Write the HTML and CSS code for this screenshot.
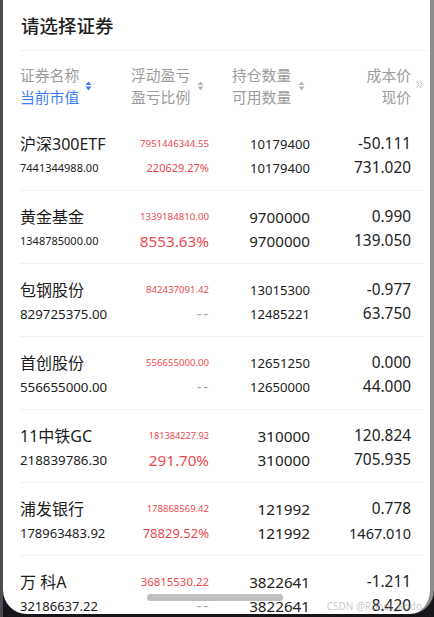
FILE: index.html
```html
<!DOCTYPE html>
<html lang="zh-CN">
<head>
<meta charset="utf-8">
<title>请选择证券</title>
<link rel="stylesheet" href="styles.css">
</head>
<body>
<div class="screen">
  <div class="title">请选择证券</div>

  <div class="thead">
    <div class="th">
      <div class="th-text"><div class="hl">证券名称</div><div class="hl active">当前市值</div></div>
      <svg class="sort on" width="7" height="10" viewBox="0 0 7 10"><path d="M3.5 0.5L6.5 4H0.5Z"/><path d="M0.5 5.5H6.5L3.5 9.5Z"/></svg>
    </div>
    <div class="th">
      <div class="th-text"><div class="hl">浮动盈亏</div><div class="hl">盈亏比例</div></div>
      <svg class="sort" width="7" height="10" viewBox="0 0 7 10"><path d="M3.5 0.5L6.5 4H0.5Z"/><path d="M0.5 5.5H6.5L3.5 9.5Z"/></svg>
    </div>
    <div class="th">
      <div class="th-text"><div class="hl">持仓数量</div><div class="hl">可用数量</div></div>
      <svg class="sort" width="7" height="10" viewBox="0 0 7 10"><path d="M3.5 0.5L6.5 4H0.5Z"/><path d="M0.5 5.5H6.5L3.5 9.5Z"/></svg>
    </div>
    <div class="th th-end">
      <div class="th-text right"><div class="hl">成本价</div><div class="hl">现价</div></div>
      <svg class="more" width="7" height="9" viewBox="0 0 7 9"><path d="M0.6 1L3 4.5L0.6 8M3.8 1L6.2 4.5L3.8 8"/></svg>
    </div>
  </div>

  <div class="rows">
    <div class="row">
      <div class="cell"><div class="ln name">沪深300ETF</div><div class="ln f110">7441344988.00</div></div>
      <div class="cell num"><div class="ln red f97">7951446344.55</div><div class="ln red f110">220629.27%</div></div>
      <div class="cell num"><div class="ln f131">10179400</div><div class="ln f131">10179400</div></div>
      <div class="cell num"><div class="ln f154">-50.111</div><div class="ln f154">731.020</div></div>
    </div>
    <div class="row">
      <div class="cell"><div class="ln name">黄金基金</div><div class="ln f110">1348785000.00</div></div>
      <div class="cell num"><div class="ln red f97">1339184810.00</div><div class="ln red f153">8553.63%</div></div>
      <div class="cell num"><div class="ln f152">9700000</div><div class="ln f152">9700000</div></div>
      <div class="cell num"><div class="ln f154">0.990</div><div class="ln f154">139.050</div></div>
    </div>
    <div class="row">
      <div class="cell"><div class="ln name">包钢股份</div><div class="ln f133">829725375.00</div></div>
      <div class="cell num"><div class="ln red f96">842437091.42</div><div class="ln dash">--</div></div>
      <div class="cell num"><div class="ln f131">13015300</div><div class="ln f131">12485221</div></div>
      <div class="cell num"><div class="ln f154">-0.977</div><div class="ln f154">63.750</div></div>
    </div>
    <div class="row">
      <div class="cell"><div class="ln name">首创股份</div><div class="ln f133">556655000.00</div></div>
      <div class="cell num"><div class="ln red f96">556655000.00</div><div class="ln dash">--</div></div>
      <div class="cell num"><div class="ln f131">12651250</div><div class="ln f131">12650000</div></div>
      <div class="cell num"><div class="ln f154">0.000</div><div class="ln f154">44.000</div></div>
    </div>
    <div class="row">
      <div class="cell"><div class="ln name">11中铁GC</div><div class="ln f133">218839786.30</div></div>
      <div class="cell num"><div class="ln red f92">181384227.92</div><div class="ln red f152">291.70%</div></div>
      <div class="cell num"><div class="ln f153">310000</div><div class="ln f153">310000</div></div>
      <div class="cell num"><div class="ln f154">120.824</div><div class="ln f154">705.935</div></div>
    </div>
    <div class="row">
      <div class="cell"><div class="ln name">浦发银行</div><div class="ln f130">178963483.92</div></div>
      <div class="cell num"><div class="ln red f95">178868569.42</div><div class="ln red f130">78829.52%</div></div>
      <div class="cell num"><div class="ln f153">121992</div><div class="ln f153">121992</div></div>
      <div class="cell num"><div class="ln f154">0.778</div><div class="ln f145">1467.010</div></div>
    </div>
    <div class="row">
      <div class="cell"><div class="ln name">万 科A</div><div class="ln f130">32186637.22</div></div>
      <div class="cell num"><div class="ln red f114">36815530.22</div><div class="ln dash">--</div></div>
      <div class="cell num"><div class="ln f152">3822641</div><div class="ln f152">3822641</div></div>
      <div class="cell num"><div class="ln f154">-1.211</div><div class="ln f154">8.420</div></div>
    </div>
  </div>

  <div class="scrollbar"></div>
  <div class="watermark">CSDN @Robot_Kodo</div>
</div>
</body>
</html>
```
FILE: styles.css
```css
* { box-sizing: border-box; margin: 0; padding: 0; }

html, body { width: 434px; height: 617px; overflow: hidden; }

body {
  background: linear-gradient(to right, #4c4b52 0, #4c4b52 3px, #17161b 3px);
  font-family: "Noto Sans", "Noto Sans CJK SC", sans-serif;
  color: #222;
}

.screen {
  position: relative;
  margin-left: 3px;
  width: 431px;
  height: 614px;
  background: #fff;
  border-right: 4px solid #8c8c8c;
  border-radius: 0 0 24px 24px;
  overflow: hidden;
}

.title {
  height: 51px;
  line-height: 52px;
  margin: 0 3px 0 17px;
  padding-left: 1px;
  font-size: 18.5px;
  font-weight: 500;
  color: #1f1f1f;
  border-bottom: 1px solid #f1f1f1;
}

.thead, .row {
  display: grid;
  grid-template-columns: 111px 101px 101px 1fr;
  margin: 0 6px 0 17px;
  padding-right: 13px;
}

.thead { padding-top: 13px; padding-bottom: 10px; }

.th { display: flex; align-items: center; gap: 6px; }
.th:nth-child(2), .th:nth-child(3) { gap: 7px; }
.th-end { justify-content: flex-end; gap: 5px; }

.th-text.right { text-align: right; }

.hl {
  height: 22px;
  line-height: 22px;
  font-size: 14.8px;
  color: #9b9b9b;
  white-space: nowrap;
}
.hl.active { color: #3b7df0; }

.sort { fill: #b4b4b4; }
.sort.on { fill: #3b7df0; }

.more {
  margin-right: -12px;
  margin-bottom: 4px;
  fill: none;
  stroke: #bdbdbd;
  stroke-width: 1;
}

.row {
  padding-top: 14px;
  padding-bottom: 10px;
  border-bottom: 1px solid #f1f1f1;
}

.cell { display: flex; flex-direction: column; }
.cell.num { align-items: flex-end; }
.cell.num:nth-child(2), .cell.num:nth-child(3) { padding-right: 23px; }

.ln {
  height: 24px;
  line-height: 24px;
  white-space: nowrap;
  color: #222;
}

.name { font-size: 16px; color: #1c1c1c; }

.red { color: #ec4a50; }
.dash {
  font-size: 14px;
  letter-spacing: 2px;
  margin-right: -1px;
  color: #9a9a9a;
}

.f92 { font-size: 9.2px; }
.f95 { font-size: 9.5px; }
.f96 { font-size: 9.6px; }
.f97 { font-size: 9.7px; }
.f110 { font-size: 11px; }
.f114 { font-size: 11.4px; }
.f130 { font-size: 13px; }
.f131 { font-size: 13.1px; }
.f133 { font-size: 13.3px; }
.f145 { font-size: 14.5px; }
.f152 { font-size: 15.2px; }
.f153 { font-size: 15.3px; }
.f154 { font-size: 15.4px; }

.scrollbar {
  position: absolute;
  left: 144px;
  top: 594px;
  width: 136px;
  height: 7px;
  border-radius: 4px;
  background: rgba(170, 170, 170, 0.75);
}

.watermark {
  position: absolute;
  right: 8px;
  top: 599px;
  font-size: 10px;
  color: rgba(150, 150, 150, 0.5);
  white-space: nowrap;
}
```
